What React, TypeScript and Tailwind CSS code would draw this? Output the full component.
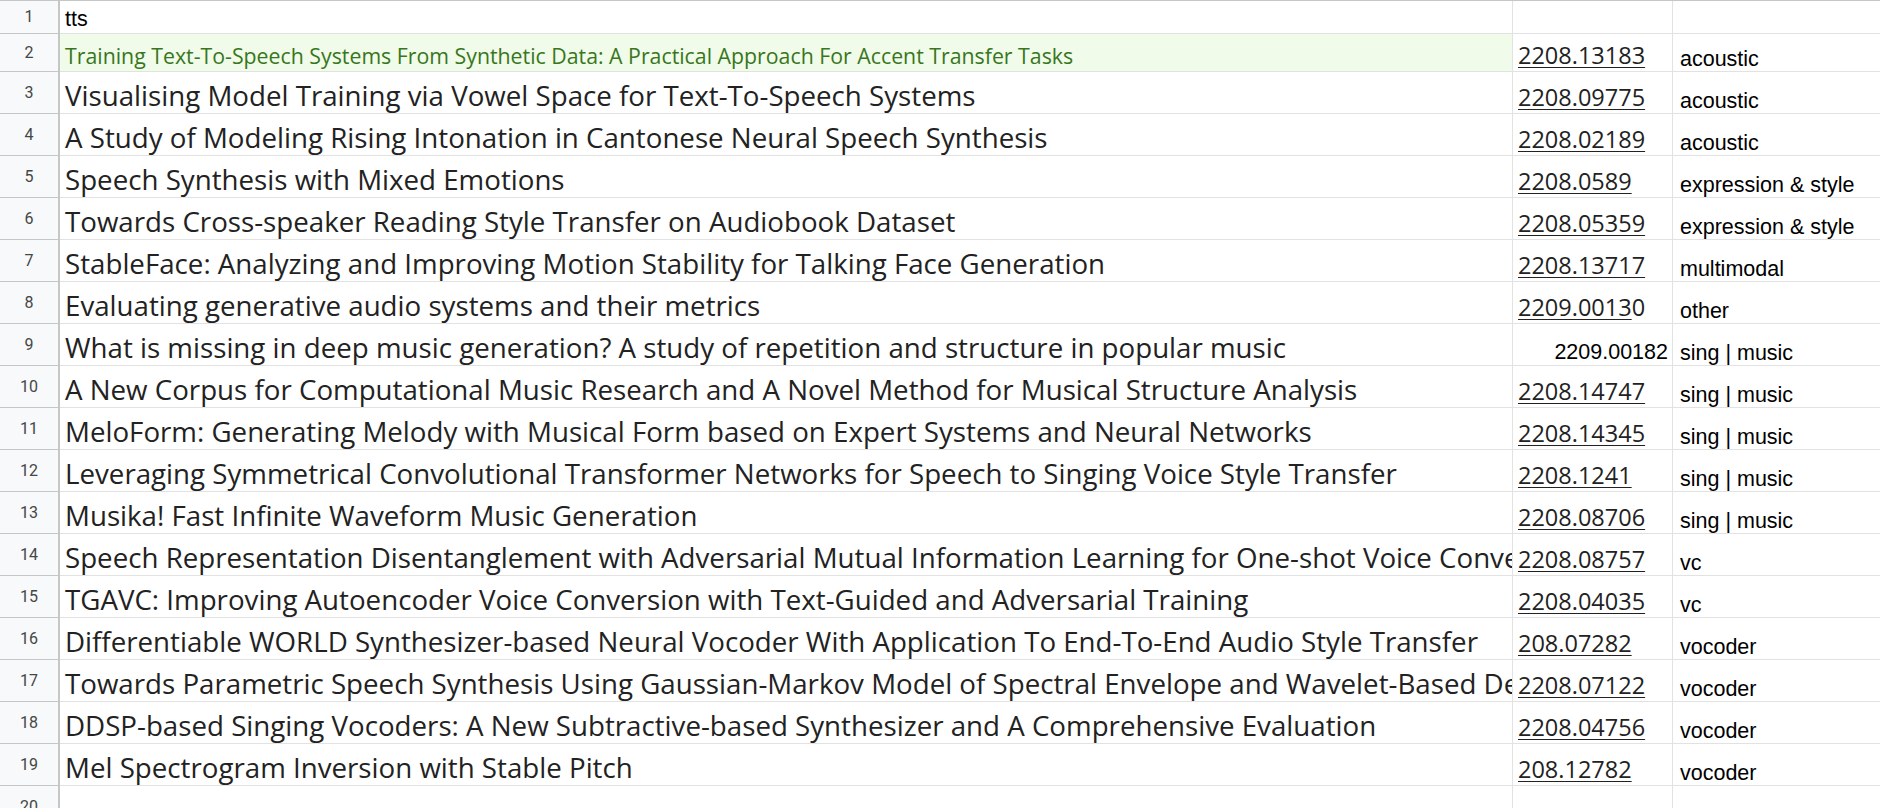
import React from "react";

type Row = {
  title: string;
  link?: React.ReactNode;
  plain?: string;
  tag: string;
};

const rows: Row[] = [
  { title: "Visualising Model Training via Vowel Space for Text-To-Speech Systems", link: "2208.09775", tag: "acoustic" },
  { title: "A Study of Modeling Rising Intonation in Cantonese Neural Speech Synthesis", link: "2208.02189", tag: "acoustic" },
  { title: "Speech Synthesis with Mixed Emotions", link: "2208.0589", tag: "expression & style" },
  { title: "Towards Cross-speaker Reading Style Transfer on Audiobook Dataset", link: "2208.05359", tag: "expression & style" },
  { title: "StableFace: Analyzing and Improving Motion Stability for Talking Face Generation", link: "2208.13717", tag: "multimodal" },
  {
    title: "Evaluating generative audio systems and their metrics",
    link: (
      <>
        <span className="underline underline-offset-[3px] decoration-1">2209.0013</span>0
      </>
    ),
    tag: "other",
  },
  { title: "What is missing in deep music generation? A study of repetition and structure in popular music", plain: "2209.00182", tag: "sing | music" },
  { title: "A New Corpus for Computational Music Research and A Novel Method for Musical Structure Analysis", link: "2208.14747", tag: "sing | music" },
  { title: "MeloForm: Generating Melody with Musical Form based on Expert Systems and Neural Networks", link: "2208.14345", tag: "sing | music" },
  { title: "Leveraging Symmetrical Convolutional Transformer Networks for Speech to Singing Voice Style Transfer", link: "2208.1241", tag: "sing | music" },
  { title: "Musika! Fast Infinite Waveform Music Generation", link: "2208.08706", tag: "sing | music" },
  { title: "Speech Representation Disentanglement with Adversarial Mutual Information Learning for One-shot Voice Conversion", link: "2208.08757", tag: "vc" },
  { title: "TGAVC: Improving Autoencoder Voice Conversion with Text-Guided and Adversarial Training", link: "2208.04035", tag: "vc" },
  { title: "Differentiable WORLD Synthesizer-based Neural Vocoder With Application To End-To-End Audio Style Transfer", link: "208.07282", tag: "vocoder" },
  { title: "Towards Parametric Speech Synthesis Using Gaussian-Markov Model of Spectral Envelope and Wavelet-Based Decomposition of F0", link: "2208.07122", tag: "vocoder" },
  { title: "DDSP-based Singing Vocoders: A New Subtractive-based Synthesizer and A Comprehensive Evaluation", link: "2208.04756", tag: "vocoder" },
  { title: "Mel Spectrogram Inversion with Stable Pitch", link: "208.12782", tag: "vocoder" },
];

const open = { fontFamily: '"Open Sans", "Noto Sans", sans-serif' };
const arial = { fontFamily: '"Liberation Sans", Arial, sans-serif' };
const roboto = { fontFamily: 'Roboto, "Liberation Sans", sans-serif' };

function RowHeader({ n, h }: { n: number; h: string }) {
  return (
    <div
      className={`${h} w-[60px] shrink-0 bg-[#f8f9fa] border-r-2 border-b border-r-[#c4c7c5] border-b-[#c4c7c5] flex items-center justify-center text-[16px] text-[#444746]`}
      style={roboto}
    >
      {n}
    </div>
  );
}

export default function App() {
  return (
    <div className="w-[1880px] h-[808px] overflow-hidden bg-white border-t border-[#c4c7c5]">
      {/* Row 1 */}
      <div className="flex">
        <RowHeader n={1} h="h-[33px]" />
        <div className="h-[33px] w-[1453px] shrink-0 border-r border-b border-[#e2e2e2] flex items-end pl-[5px] pb-[1px] text-[21.5px] leading-[25px] text-black" style={arial}>
          tts
        </div>
        <div className="h-[33px] w-[160px] shrink-0 border-r border-b border-[#e2e2e2]" />
        <div className="h-[33px] flex-1 border-b border-[#e2e2e2]" />
      </div>
      {/* Row 2 */}
      <div className="flex">
        <RowHeader n={2} h="h-[38px]" />
        <div className="h-[38px] w-[1453px] shrink-0 border-r border-b border-[#e2e2e2] bg-[#f0fbe9] flex items-center pl-[5px] pt-[6px] text-[21.3px] text-[#38761d] whitespace-nowrap overflow-hidden" style={open}>
          Training Text-To-Speech Systems From Synthetic Data: A Practical Approach For Accent Transfer Tasks
        </div>
        <div className="h-[38px] w-[160px] shrink-0 border-r border-b border-[#e2e2e2] flex items-end pl-[5px] text-[23.5px] leading-[32px] text-[#222]" style={open}>
          <span className="underline underline-offset-[3px] decoration-1">2208.13183</span>
        </div>
        <div className="h-[38px] flex-1 border-b border-[#e2e2e2] flex items-end pl-[7px] text-[21.5px] leading-[24px] text-black" style={arial}>
          acoustic
        </div>
      </div>
      {rows.map((r, i) => (
        <div className="flex" key={i}>
          <RowHeader n={i + 3} h="h-[42px]" />
          <div className="h-[42px] w-[1453px] shrink-0 border-r border-b border-[#e2e2e2] flex items-end pl-[5px] text-[27.7px] leading-[36px] text-[#222] whitespace-nowrap overflow-hidden" style={open}>
            {r.title}
          </div>
          <div className="h-[42px] w-[160px] shrink-0 border-r border-b border-[#e2e2e2] flex items-end text-[#222] whitespace-nowrap overflow-hidden">
            {r.plain ? (
              <div className="w-full text-right pr-[4px] pb-[1px] text-[21.5px] leading-[24px] text-black" style={arial}>
                {r.plain}
              </div>
            ) : (
              <div className="pl-[5px] text-[23.5px] leading-[32px]" style={open}>
                {typeof r.link === "string" ? (
                  <span className="underline underline-offset-[3px] decoration-1">{r.link}</span>
                ) : (
                  r.link
                )}
              </div>
            )}
          </div>
          <div className="h-[42px] flex-1 border-b border-[#e2e2e2] flex items-end pl-[7px] text-[21.5px] leading-[24px] text-black whitespace-nowrap" style={arial}>
            {r.tag}
          </div>
        </div>
      ))}
      {/* Row 20 */}
      <div className="flex">
        <RowHeader n={20} h="h-[42px]" />
        <div className="h-[42px] w-[1453px] shrink-0 border-r border-b border-[#e2e2e2]" />
        <div className="h-[42px] w-[160px] shrink-0 border-r border-b border-[#e2e2e2]" />
        <div className="h-[42px] flex-1 border-b border-[#e2e2e2]" />
      </div>
    </div>
  );
}
